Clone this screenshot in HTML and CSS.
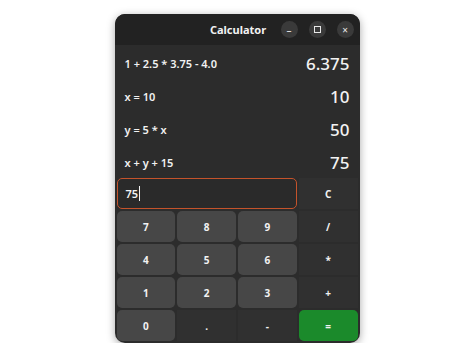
FILE: index.html
```html
<!DOCTYPE html>
<html lang="en">
<head>
    <meta charset="UTF-8">
    <title>Calculator</title>
    <link rel="stylesheet" href="styles.css">
</head>
<body>

    <div class="window">
        <!-- Title bar -->
        <div class="titlebar">
            <span class="title">Calculator</span>
            <div class="controls">
                <span class="ctl">&#8211;</span>
                <span class="ctl"><span class="square"></span></span>
                <span class="ctl">&#215;</span>
            </div>
        </div>

        <!-- History -->
        <div class="history">
            <div class="row"><span class="expr">1 + 2.5 * 3.75 - 4.0</span><span class="result">6.375</span></div>
            <div class="row"><span class="expr">x = 10</span><span class="result">10</span></div>
            <div class="row"><span class="expr">y = 5 * x</span><span class="result">50</span></div>
            <div class="row"><span class="expr">x + y + 15</span><span class="result">75</span></div>
        </div>

        <!-- Keypad -->
        <div class="keypad">
            <div class="entry">75<span class="caret"></span></div>
            <button class="key flat">C</button>
            <button class="key">7</button>
            <button class="key">8</button>
            <button class="key">9</button>
            <button class="key flat">/</button>
            <button class="key">4</button>
            <button class="key">5</button>
            <button class="key">6</button>
            <button class="key flat">*</button>
            <button class="key">1</button>
            <button class="key">2</button>
            <button class="key">3</button>
            <button class="key flat">+</button>
            <button class="key">0</button>
            <button class="key flat">.</button>
            <button class="key flat">-</button>
            <button class="key equals">=</button>
        </div>
    </div>

</body>
</html>
```
FILE: styles.css
```css
body {
    font-family: 'Noto Sans', 'Open Sans', sans-serif;
    margin: 0;
    padding: 14px 0 0;
    background-color: #fff;
}

.window {
    width: 245px;
    margin: 0 auto;
    background-color: #2c2c2c;
    border-radius: 10px;
    overflow: hidden;
    box-shadow: 0 2px 8px rgba(0, 0, 0, 0.35);
    color: #f2f2f2;
}

.titlebar {
    height: 31px;
    background-color: #222;
    display: flex;
    align-items: center;
    justify-content: center;
    position: relative;
}

.title {
    font-size: 11px;
    font-weight: 700;
    padding-left: 2px;
}

.controls {
    position: absolute;
    right: 6px;
    top: 7px;
    display: flex;
    gap: 11px;
}

.ctl {
    width: 17px;
    height: 17px;
    border-radius: 50%;
    background-color: #3a3a3a;
    display: flex;
    align-items: center;
    justify-content: center;
    font-size: 10px;
    line-height: 1;
    color: #e8e8e8;
}

.square {
    width: 5px;
    height: 5px;
    border: 1px solid #e8e8e8;
}

.history {
    padding: 2px 10px 0;
    height: 131px;
}

.row {
    height: 33px;
    display: flex;
    justify-content: space-between;
    align-items: center;
}

.expr {
    font-size: 11px;
    font-weight: 600;
}

.result {
    font-size: 17px;
    font-weight: 500;
}

.keypad {
    display: grid;
    grid-template-columns: repeat(4, 1fr);
    grid-auto-rows: 31px;
    gap: 2px;
    padding: 0 2px 2px;
}

.entry {
    grid-column: span 3;
    border: 1.5px solid #c4532b;
    border-radius: 5px;
    background-color: #2a2a2a;
    display: flex;
    align-items: center;
    padding-left: 8px;
    font-size: 11px;
    font-weight: 600;
    box-sizing: border-box;
}

.caret {
    width: 1px;
    height: 15px;
    background-color: #f2f2f2;
    margin-left: 1px;
}

.key {
    font-family: inherit;
    font-size: 10px;
    font-weight: 700;
    color: #f2f2f2;
    background-color: #474747;
    border: none;
    border-radius: 5px;
    padding: 0;
}

.key.flat {
    background-color: #303030;
    border-radius: 0;
}

.key.equals {
    background-color: #1b8a2b;
}
```
